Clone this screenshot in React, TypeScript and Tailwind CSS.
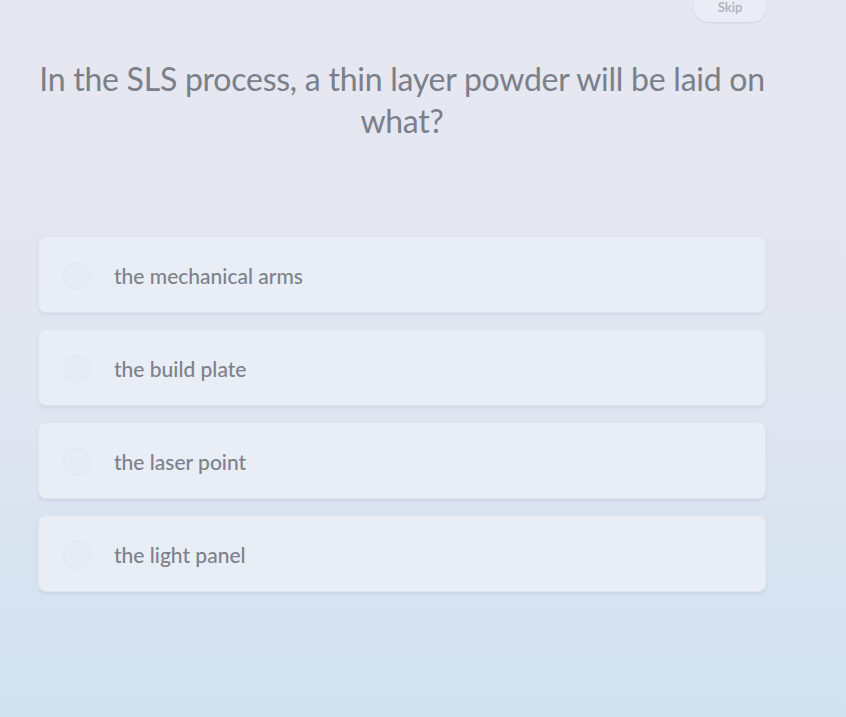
import React from "react";

const options = [
  "the mechanical arms",
  "the build plate",
  "the laser point",
  "the light panel",
];

export default function App() {
  return (
    <div
      className="relative h-[717px] w-[846px] overflow-hidden bg-gradient-to-b from-[#e6e7f1] via-[#e2e6f1] to-[#d0e1ef]"
      style={{ fontFamily: "Lato, 'Open Sans', sans-serif" }}
    >
      <div className="ml-[38px] w-[728px]">
        {/* top bar with skip */}
        <div className="flex h-[22px] justify-end">
          <div className="-mt-[12px] flex h-[34px] w-[72px] items-end justify-center rounded-[14px] bg-[#eaedf6] pb-[8px] shadow-[0_1px_2px_rgba(150,160,180,0.25)]">
            <span className="text-[13px] leading-[13px] font-bold text-[#b2b6c0]">Skip</span>
          </div>
        </div>

        {/* question */}
        <h1 className="-mx-[14px] mt-[36px] text-center text-[32px] leading-[42px] font-normal tracking-[-0.25px] text-[#7b7f88]">
          In the SLS process, a thin layer powder will be laid on what?
        </h1>

        {/* answer options */}
        <div className="mt-[94px] flex flex-col gap-[16px]">
          {options.map((label) => (
            <div
              key={label}
              className="flex h-[77px] items-center rounded-[8px] border border-[#dfe4ed] bg-[#e8edf6] pt-[3px] pl-[24px] shadow-[0_2px_3px_rgba(160,170,190,0.22)]"
            >
              <div className="h-[28px] w-[28px] rounded-full border border-[#e2e6ef] bg-[#e6ebf4]" />
              <span className="ml-[23px] text-[21px] font-medium text-[#7d818a]">
                {label}
              </span>
            </div>
          ))}
        </div>
      </div>
    </div>
  );
}
